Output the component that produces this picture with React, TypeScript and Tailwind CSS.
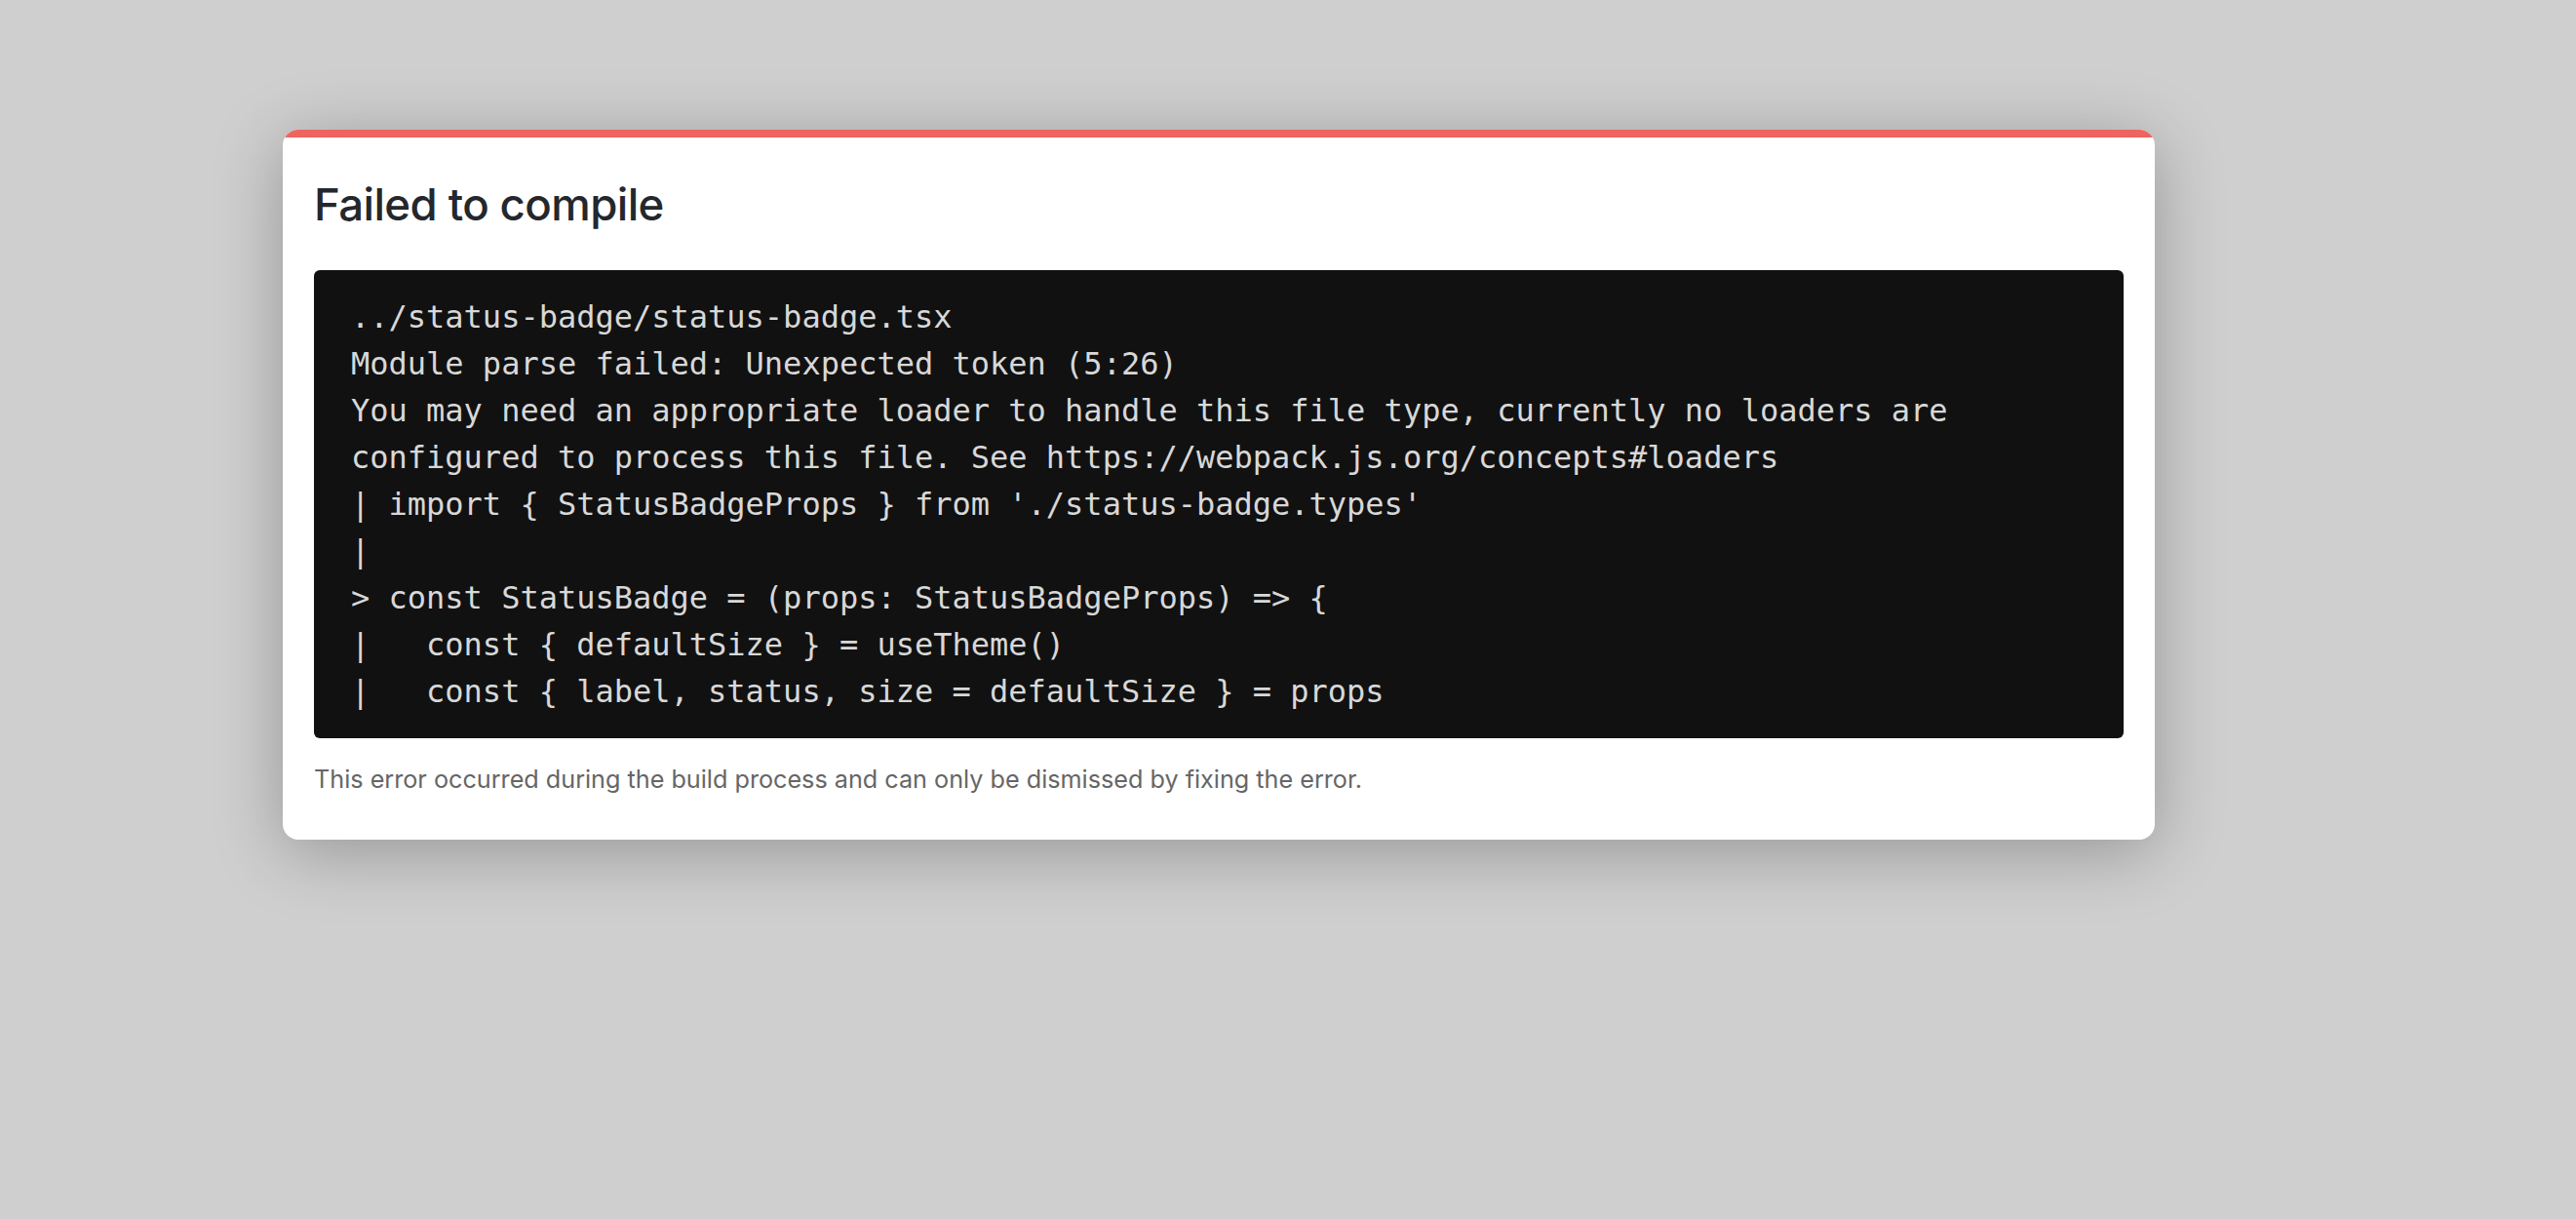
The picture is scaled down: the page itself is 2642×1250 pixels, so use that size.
import React from 'react';

const codeLines = [
  '../status-badge/status-badge.tsx',
  'Module parse failed: Unexpected token (5:26)',
  'You may need an appropriate loader to handle this file type, currently no loaders are',
  'configured to process this file. See https://webpack.js.org/concepts#loaders',
  "| import { StatusBadgeProps } from './status-badge.types'",
  '|',
  '> const StatusBadge = (props: StatusBadgeProps) => {',
  '|   const { defaultSize } = useTheme()',
  '|   const { label, status, size = defaultSize } = props',
];

export default function App() {
  return (
    <div className="min-h-screen w-full bg-[#cfcfcf] pt-[133px] pl-[290px]">
      <div className="w-[1920px] overflow-hidden rounded-2xl bg-white shadow-[0_12px_70px_rgba(0,0,0,0.28)]">
        <div className="h-2 bg-[#ee645e]" />
        <div className="px-8 pt-10 pb-[44px]">
          <h1 className="font-['Inter',sans-serif] text-[45.6px] leading-[58px] font-medium tracking-[-0.6px] text-[#24272c]">
            Failed to compile
          </h1>
          <pre className="mt-[38px] rounded-md bg-[#111111] py-6 pl-[38px] pr-6 font-['DejaVu_Sans_Mono',monospace] text-[32px] leading-[48px] text-[#d8d8d8]">
            {codeLines.join('\n')}
          </pre>
          <p className="mt-6 font-['Inter',sans-serif] text-[25.2px] leading-9 text-[#666666]">
            This error occurred during the build process and can only be dismissed by fixing the error.
          </p>
        </div>
      </div>
    </div>
  );
}
